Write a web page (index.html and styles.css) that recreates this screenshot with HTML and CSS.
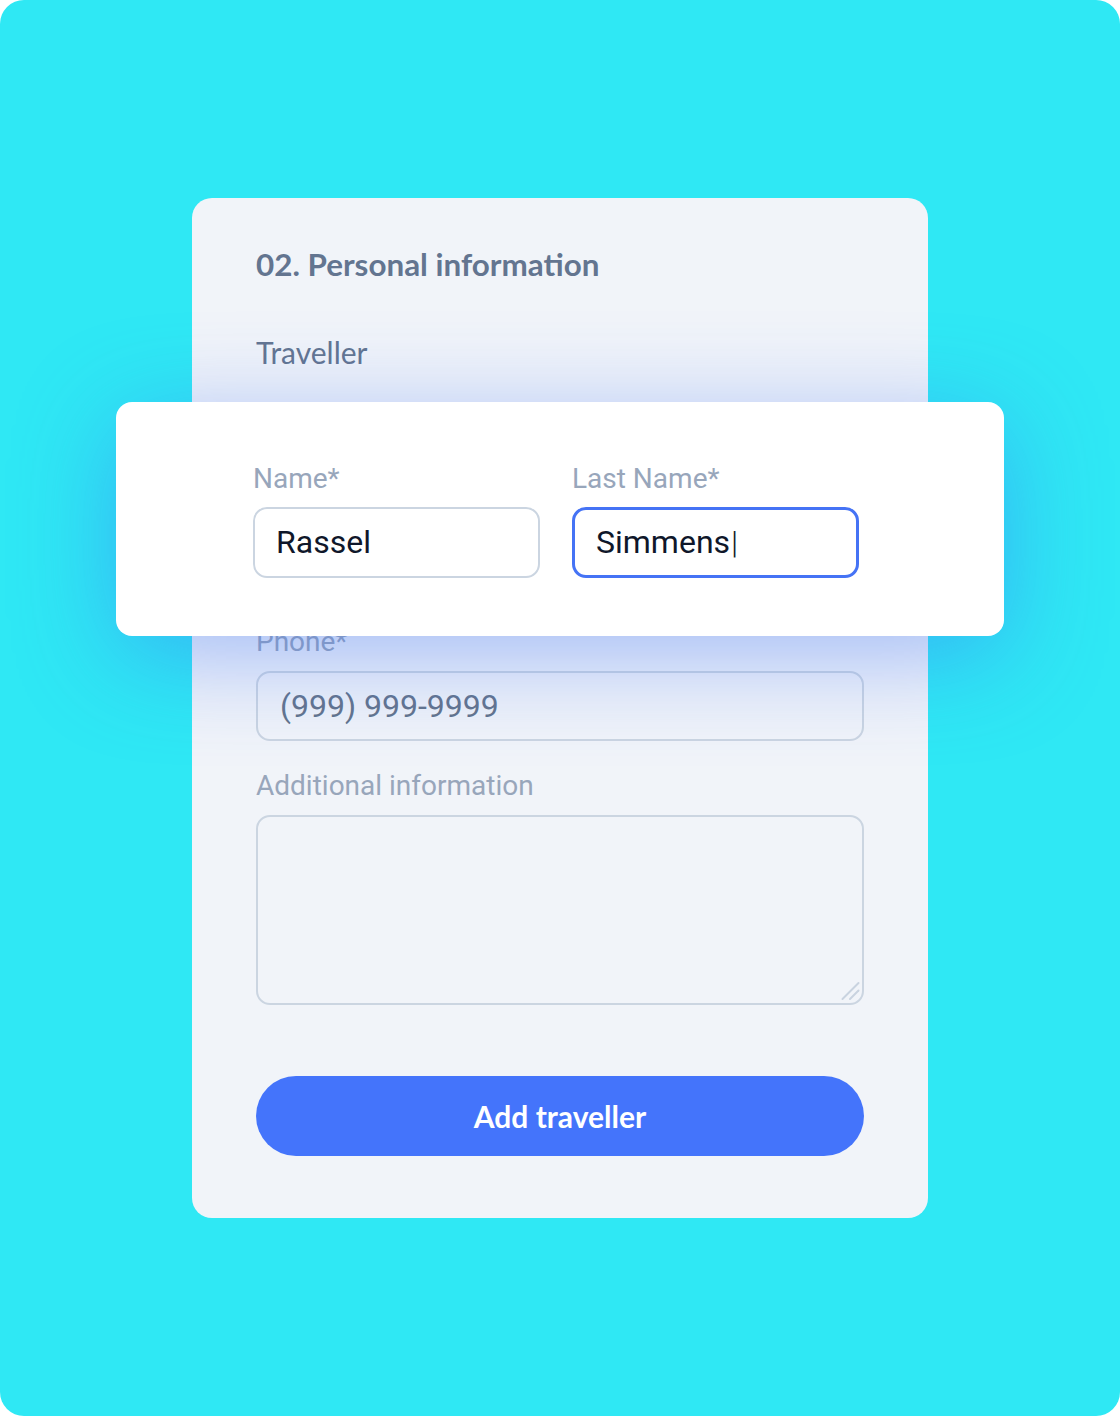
FILE: index.html
```html
<!DOCTYPE html>
<html>
<head>
<meta charset="utf-8">
<link rel="stylesheet" href="styles.css">
</head>
<body>
<div class="canvas">
  <div class="card">
    <h2 class="title">02. Personal information</h2>
    <div class="subtitle">Traveller</div>
    <div class="spacer"></div>
    <label class="label phone-label">Phone*</label>
    <div class="field field-muted">(999) 999-9999</div>
    <label class="label add-label">Additional information</label>
    <div class="area-wrap">
      <textarea class="area"></textarea>
      <svg class="grip" width="20" height="20" viewBox="0 0 20 20">
        <line x1="2.5" y1="18" x2="18.5" y2="2" stroke="#c9d3e0" stroke-width="2" stroke-linecap="round"/>
        <line x1="10" y1="18" x2="18.5" y2="9.5" stroke="#c9d3e0" stroke-width="2" stroke-linecap="round"/>
      </svg>
    </div>
    <button class="btn">Add traveller</button>

    <div class="float">
      <div class="col">
        <div class="label">Name*</div>
        <div class="field field-white">Rassel</div>
      </div>
      <div class="col">
        <div class="label">Last Name*</div>
        <div class="field field-white field-focus">Simmens<span class="caret">|</span></div>
      </div>
    </div>
  </div>
</div>
</body>
</html>
```
FILE: styles.css
```css
html, body {
  margin: 0;
  padding: 0;
  background: #ffffff;
}
.canvas {
  width: 1120px;
  height: 1416px;
  background: #2fe8f4;
  border-radius: 24px;
  display: flex;
  justify-content: center;
  padding-top: 198px;
  box-sizing: border-box;
  overflow: hidden;
}
.card {
  position: relative;
  width: 736px;
  height: 1020px;
  background: #f1f4f9;
  border-radius: 20px;
  padding: 0 64px;
  box-sizing: border-box;
  display: flex;
  flex-direction: column;
}
.title {
  margin: 44px 0 0 0;
  font-family: Lato, "Open Sans", sans-serif;
  font-weight: 700;
  font-size: 31.4px;
  line-height: 44px;
  color: #637590;
}
.subtitle {
  margin-top: 46px;
  font-family: Lato, "Open Sans", sans-serif;
  font-weight: 400;
  font-size: 30px;
  line-height: 40px;
  color: #637590;
}
.spacer {
  height: 254px;
}
.label {
  display: block;
  font-family: Roboto, "Liberation Sans", sans-serif;
  font-size: 28px;
  line-height: 32px;
  color: #98a6bb;
}
.phone-label {
  margin-bottom: 13px;
}
.field {
  height: 70px;
  box-sizing: border-box;
  border: 2px solid #cbd5e1;
  border-radius: 14px;
  padding: 0 22px;
  display: flex;
  align-items: center;
  font-family: Roboto, "Liberation Sans", sans-serif;
  font-size: 32px;
}
.field-muted {
  color: #64748b;
  background: transparent;
}
.add-label {
  margin-top: 29px;
  margin-bottom: 13px;
}
.area-wrap {
  position: relative;
  height: 190px;
}
.area {
  display: block;
  height: 190px;
  box-sizing: border-box;
  border: 2px solid #cbd5e1;
  border-radius: 14px;
  background: transparent;
  margin: 0;
  padding: 0;
  width: 100%;
  resize: none;
  outline: none;
}
.grip {
  position: absolute;
  right: 4px;
  bottom: 4px;
}
.btn {
  margin-top: 71px;
  height: 80px;
  width: 100%;
  border: none;
  border-radius: 40px;
  background: #4474fb;
  color: #ffffff;
  font-family: Lato, "Open Sans", sans-serif;
  font-weight: 700;
  font-size: 30px;
  padding: 0;
}
.float {
  position: absolute;
  left: -76px;
  top: 204px;
  width: 888px;
  height: 234px;
  box-sizing: border-box;
  background: #ffffff;
  border-radius: 16px;
  box-shadow: 0 20px 100px rgba(60, 112, 245, 0.45);
  padding: 61px 0 0 137px;
  display: grid;
  grid-template-columns: 287px 287px;
  column-gap: 32px;
  align-content: start;
}
.col .label {
  margin-bottom: 12px;
}
.field-white {
  height: 71px;
  background: #ffffff;
  color: #0f172a;
  padding-left: 21px;
  padding-bottom: 2px;
}
.field-focus {
  border: 3px solid #4573f5;
  padding-left: 21px;
}
.caret {
  font-weight: 300;
  margin-left: 1px;
}
```
